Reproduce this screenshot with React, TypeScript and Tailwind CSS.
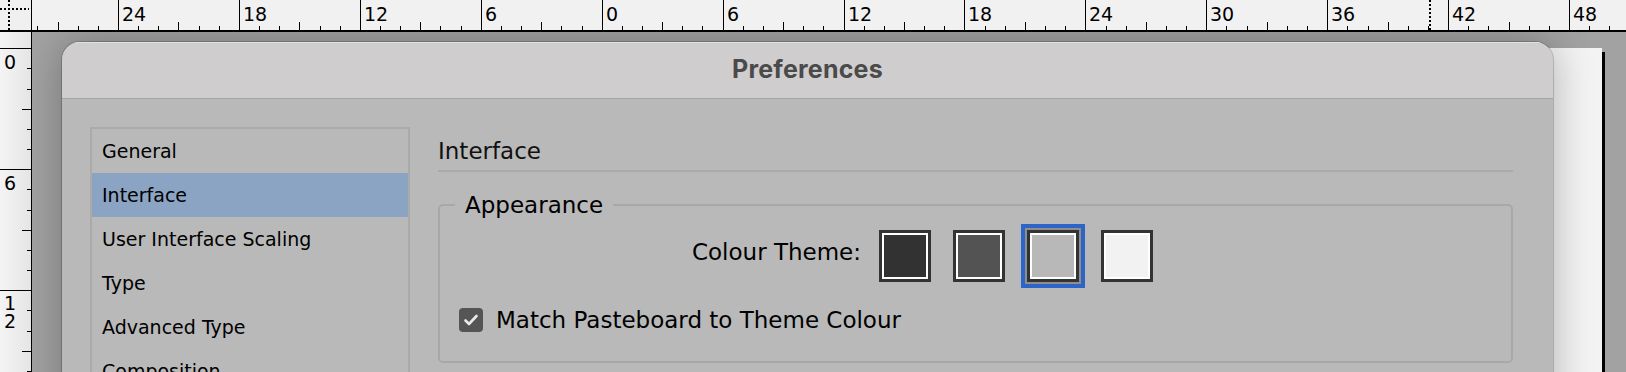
import React from "react";

const TOP_LABELS = ["24", "18", "12", "6", "0", "6", "12", "18", "24", "30", "36", "42", "48"];
const MAJOR = 120.92;
const MINOR = MAJOR / 6;

function TopRuler() {
  // global x coords; svg starts at x=32
  const ox = 32;
  const lines: React.ReactNode[] = [];
  for (let k = -1; k <= 13; k++) {
    const X = 118 + MAJOR * k;
    const xm = Math.round(X) + 0.5 - ox;
    lines.push(<line key={`M${k}`} x1={xm} x2={xm} y1={0} y2={30} stroke="#000" strokeWidth={1} />);
    for (let j = 1; j <= 5; j++) {
      const x = Math.round(X + MINOR * j) + 0.5 - ox;
      const tall = j === 3;
      lines.push(<line key={`m${k}-${j}`} x1={x} x2={x} y1={tall ? 22 : 26} y2={30} stroke="#000" strokeWidth={1} />);
    }
    if (k >= 0 && k < TOP_LABELS.length) {
      lines.push(
        <text key={`t${k}`} x={Math.round(X) + 4 - ox} y={21} fontFamily="DejaVu Sans" fontSize={19} fill="#000">
          {TOP_LABELS[k]}
        </text>
      );
    }
  }
  return (
    <svg width={1594} height={30} className="block">
      {lines}
      <line x1={1430 - ox} x2={1430 - ox} y1={0} y2={30} stroke="#000" strokeWidth={2} strokeDasharray="2 2" />
    </svg>
  );
}

function LeftRuler() {
  const oy = 32;
  const els: React.ReactNode[] = [];
  for (let k = -1; k <= 2; k++) {
    const Y = 48.3 + 121 * k;
    const ym = Math.round(Y) + 0.5 - oy;
    els.push(<line key={`M${k}`} x1={0} x2={31} y1={ym} y2={ym} stroke="#000" strokeWidth={1} />);
    for (let j = 1; j <= 5; j++) {
      const y = Math.round(Y + (121 / 6) * j) + 0.5 - oy;
      const tall = j === 3;
      els.push(<line key={`m${k}-${j}`} x1={tall ? 22 : 27} x2={31} y1={y} y2={y} stroke="#000" strokeWidth={1} />);
    }
  }
  const txt = (key: string, y: number, s: string) => (
    <text key={key} x={4} y={y - oy} fontFamily="DejaVu Sans" fontSize={19} fill="#000">
      {s}
    </text>
  );
  els.push(txt("l0", 69, "0"));
  els.push(txt("l6", 190, "6"));
  els.push(txt("l1", 310, "1"));
  els.push(txt("l2", 328, "2"));
  return (
    <svg width={31} height={340} className="block">
      {els}
    </svg>
  );
}

function Corner() {
  return (
    <svg width={31} height={30} className="block">
      <line x1={0} x2={29} y1={9} y2={9} stroke="#000" strokeWidth={2} strokeDasharray="2 2" />
      <line x1={9} x2={9} y1={0} y2={30} stroke="#000" strokeWidth={2} strokeDasharray="2 2" />
    </svg>
  );
}

function Swatch({ fill, selected }: { fill: string; selected?: boolean }) {
  const inner = (
    <div className="w-[52px] h-[52px] border-[3px] border-[#333333] bg-white p-[2px]">
      <div className={`w-full h-full ${fill}`} />
    </div>
  );
  if (selected) {
    return (
      <div className="w-[64px] h-[64px] border-4 border-[#2e63c8] bg-[#8e8e8e] flex items-center justify-center">
        {inner}
      </div>
    );
  }
  return <div className="w-[64px] h-[64px] flex items-center justify-center">{inner}</div>;
}

const ITEMS = ["General", "Interface", "User Interface Scaling", "Type", "Advanced Type", "Composition", "Units & Increments"];

export default function App() {
  return (
    <div className="w-[1626px] h-[372px] overflow-hidden bg-[#a2a2a2] font-['DejaVu_Sans',sans-serif] text-black">
      {/* top ruler row */}
      <div className="flex h-[32px] border-b-2 border-black">
        <div className="w-[32px] h-[30px] border-r border-black bg-[#f0f0f0]">
          <Corner />
        </div>
        <div className="flex-1 h-[30px] bg-[#f1f1f1] overflow-hidden">
          <TopRuler />
        </div>
      </div>
      <div className="flex h-[340px]">
        <div className="w-[32px] h-full border-r border-black bg-gradient-to-r from-[#f4f4f4] to-[#e5e5e5] overflow-hidden">
          <LeftRuler />
        </div>
        {/* pasteboard */}
        <div className="relative flex-1 h-full overflow-hidden">
          <div className="absolute left-[1400px] top-[16px] w-[170px] h-[400px] bg-[#f3f3f3] shadow-[3px_4px_0_#000]" />
          <div className="relative z-10 ml-[30px] mt-[10px] w-[1491px] h-[420px] rounded-t-[18px] overflow-hidden bg-[#b9b9b9] shadow-[0_0_0_1px_rgba(0,0,0,0.18),0_0_40px_rgba(0,0,0,0.28)]">
            {/* title bar */}
            <div className="h-[57px] bg-[#cfcdce] border-b border-[#a4a4a4] shadow-[inset_0_1px_0_#e2e2e2] flex items-center justify-center">
              <span className="font-['Inter',sans-serif] font-bold text-[25px] text-[#4a4a4a] tracking-[0.2px]">Preferences</span>
            </div>
            {/* body */}
            <div className="flex pl-[28px] pt-[28px] pr-[40px]">
              <div className="w-[320px] h-[300px] border-2 border-[#aaaaaa] shrink-0">
                {ITEMS.map((it) => (
                  <div
                    key={it}
                    className={
                      it === "Interface"
                        ? "h-[44px] flex items-center pl-[10px] text-[19px] bg-[#8ba4c4]"
                        : "h-[44px] flex items-center pl-[10px] text-[19px]"
                    }
                  >
                    {it}
                  </div>
                ))}
              </div>
              <div className="flex-1 ml-[28px] pt-[10px]">
                <div className="text-[23px] leading-[28px] text-[#111]">Interface</div>
                <div className="mt-[5px] h-[2px] bg-[#aaaaaa]" />
                <fieldset className="mt-[19px] border-2 border-[#a8a8a8] rounded-[5px] pb-[27px]">
                  <legend className="ml-[15px] px-[10px] text-[23px] leading-[28px]">Appearance</legend>
                  <div className="flex items-center mt-[5px]">
                    <div className="w-[421px] text-right text-[23px] leading-[28px] mb-[8px]">Colour Theme:</div>
                    <div className="flex gap-[10px] ml-[12px]">
                      <Swatch fill="bg-[#323232]" />
                      <Swatch fill="bg-[#535353]" />
                      <Swatch fill="bg-[#b8b8b8]" selected />
                      <Swatch fill="bg-[#f2f2f2]" />
                    </div>
                  </div>
                  <div className="flex items-center mt-[18px] pl-[19px]">
                    <div className="w-[24px] h-[24px] rounded-[4px] bg-[#555555] flex items-center justify-center">
                      <svg width="24" height="24" viewBox="0 0 24 24">
                        <path d="M6.5 12.5 L10 16 L17.5 8" fill="none" stroke="#e9e9e9" strokeWidth="2.6" strokeLinecap="round" strokeLinejoin="round" />
                      </svg>
                    </div>
                    <span className="ml-[13px] text-[23px] leading-[28px]">Match Pasteboard to Theme Colour</span>
                  </div>
                </fieldset>
              </div>
            </div>
          </div>
        </div>
      </div>
    </div>
  );
}
